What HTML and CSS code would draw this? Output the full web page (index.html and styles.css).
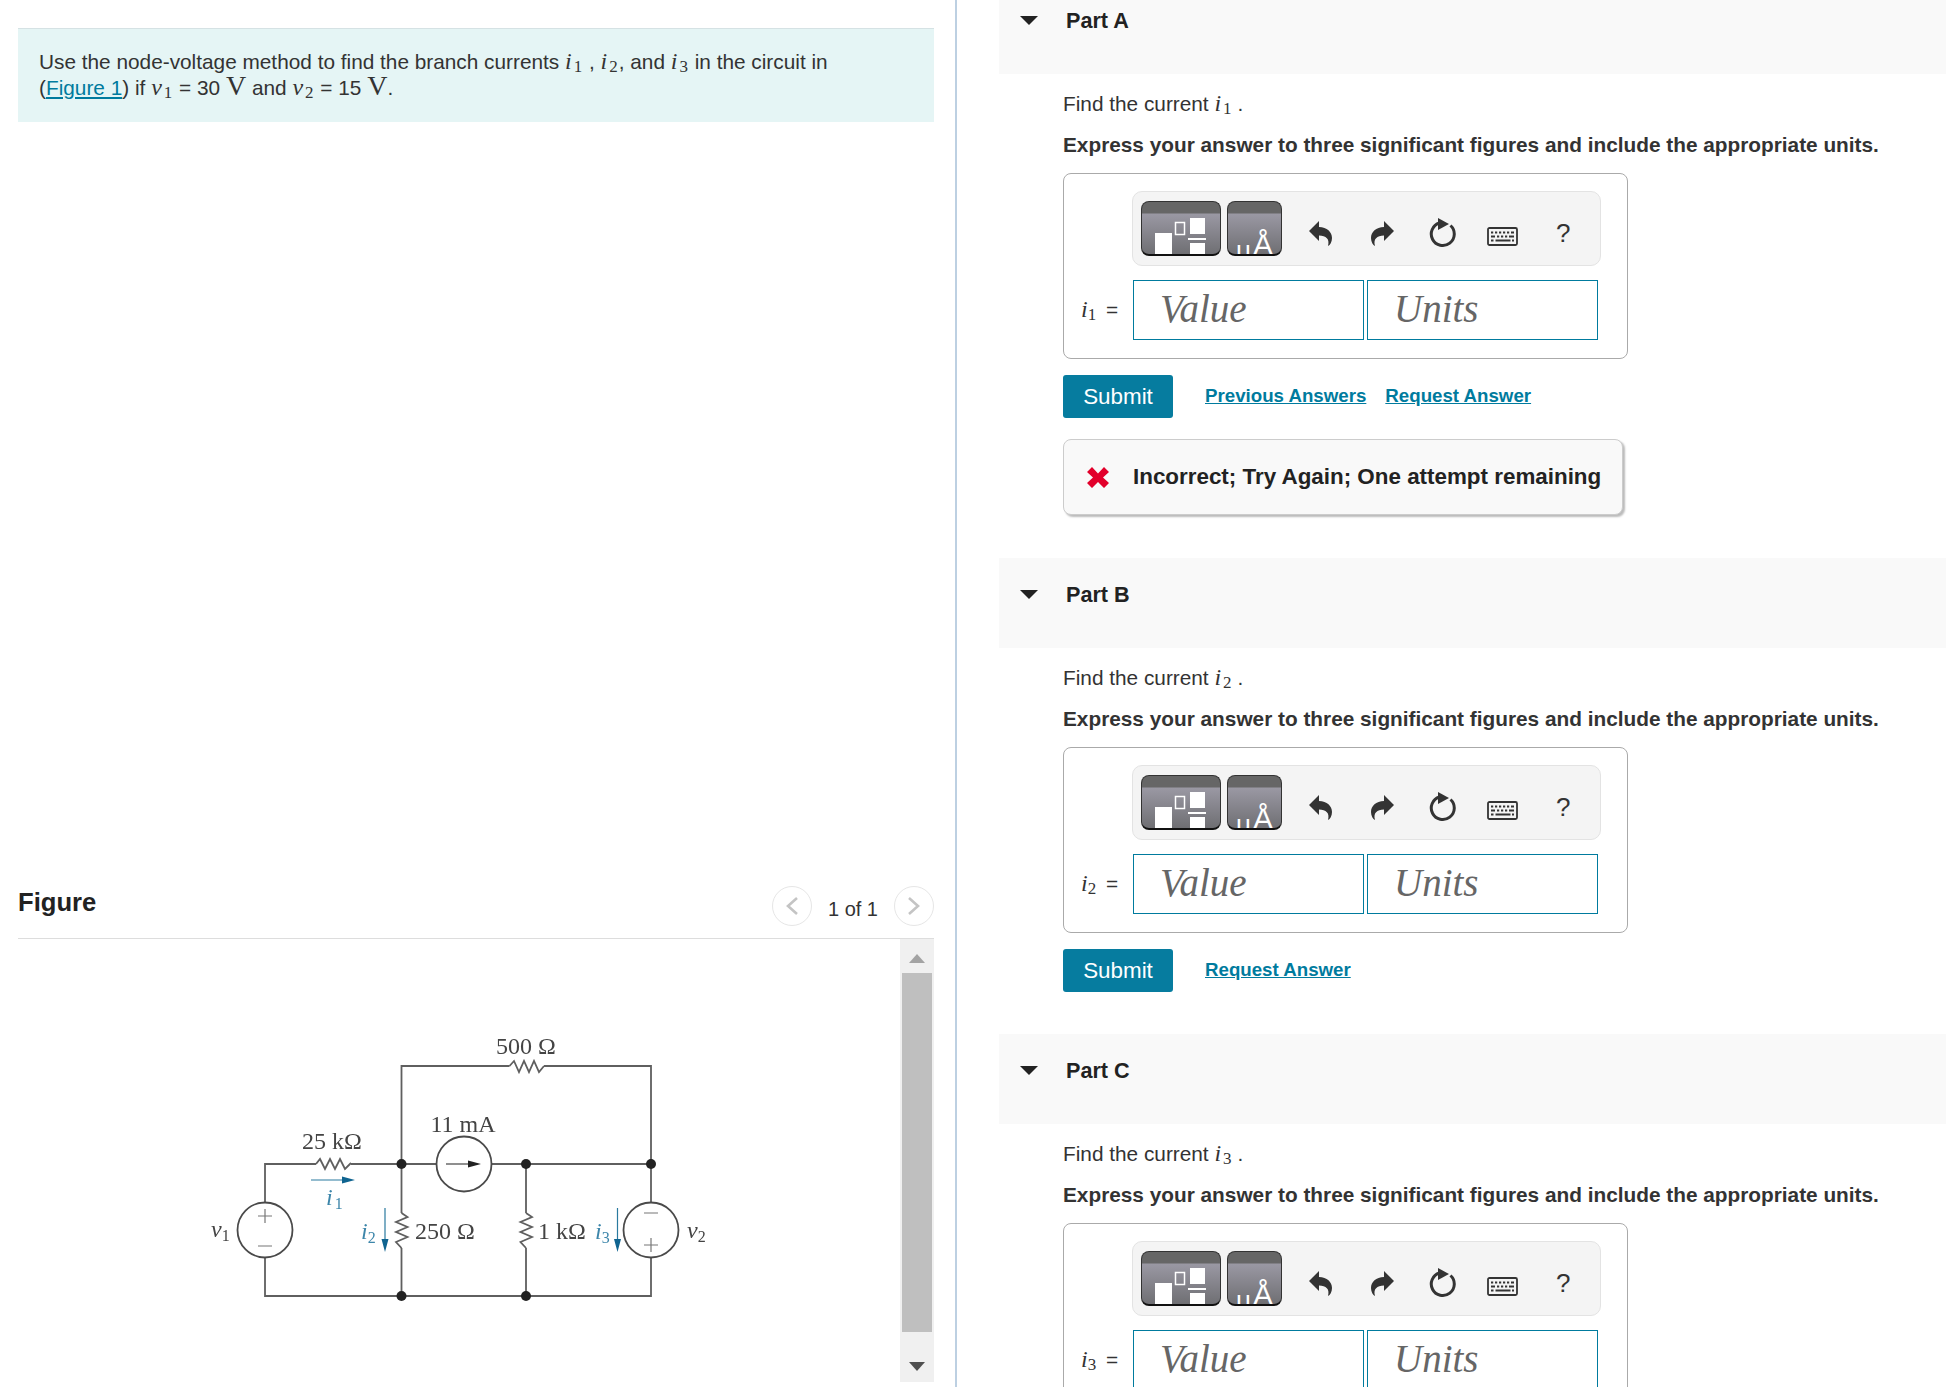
FILE: index.html
```html
<!DOCTYPE html>
<html lang="en">
<head>
<meta charset="utf-8">
<title>Node-voltage method</title>
<link rel="stylesheet" href="styles.css">
</head>
<body>
<svg class="sprite" xmlns="http://www.w3.org/2000/svg">
  <symbol id="i-undo" viewBox="0 0 23 25"><path d="M0 10 L10 0 V6 C18 6 23 11 23 17 C23 21 21 24 19 25 C21 18 17 14.500 10 14.500 V20 Z"/></symbol>
  <symbol id="i-redo" viewBox="0 0 23 25"><path d="M23 10 L13 0 V6 C5 6 0 11 0 17 C0 21 2 24 4 25 C2 18 6 14.500 13 14.500 V20 Z"/></symbol>
  <symbol id="i-reload" viewBox="0 0 28 31"><path d="M10.500 5 A11.500 11.500 0 1 0 21.500 7.500" fill="none" stroke="#333" stroke-width="3"/><path d="M9 0 L20 6 L9 12 Z" fill="#333"/></symbol>
  <symbol id="i-kbd" viewBox="0 0 31 19">
    <rect x="1" y="1" width="29" height="17" rx="1.500" fill="none" stroke="#333" stroke-width="1.800"/>
    <path d="M4 4.500h2.200v2H4zM8 4.500h2.200v2H8zM12 4.500h2.200v2H12zM16 4.500h2.200v2H16zM20 4.500h2.200v2H20zM24 4.500h3v2h-3zM4 8.500h4v2H4zM10 8.500h2.200v2H10zM14 8.500h2.200v2H14zM18 8.500h2.200v2H18zM22 8.500h5v2h-5zM4 12.500h2.500v2H4zM8.500 12.500h15v2h-15zM25 12.500h2v2h-2z" fill="#333"/>
  </symbol>
  <symbol id="i-templates" viewBox="0 0 80 42">
    <rect x="14" y="20" width="17" height="22" fill="#fff"/>
    <rect x="34.500" y="9.500" width="9" height="12" fill="none" stroke="#fff" stroke-width="1.500"/>
    <rect x="49" y="5" width="15" height="16" fill="#fff"/>
    <rect x="47" y="25" width="18" height="2" fill="#fff"/>
    <rect x="49" y="30" width="15" height="12" fill="#fff"/>
  </symbol>
  <symbol id="i-units" viewBox="0 0 55 42">
    <text x="9" y="45.500" class="unit-mu">μ</text>
    <text x="26" y="42" class="unit-a">Å</text>
  </symbol>
</svg>

<main class="page">
  <section class="left">
    <div class="intro">
      <p>Use the node-voltage method to find the branch currents <i class="m">i</i><sub class="ms">1</sub> , <i class="m">i</i><sub class="ms">2</sub>, and <i class="m">i</i><sub class="ms">3</sub> in the circuit in<br>(<a href="#fig">Figure 1</a>) if <i class="m">v</i><sub class="ms">1</sub> = 30 <span class="mv">V</span> and <i class="m">v</i><sub class="ms">2</sub> = 15 <span class="mv">V</span>.</p>
    </div>

    <div class="figure-head" id="fig">
      <h2>Figure</h2>
      <div class="pager">
        <span class="round"><svg width="14" height="20" viewBox="0 0 14 20"><path d="M12 2 L3 10 L12 18" fill="none" stroke="#c4c4c4" stroke-width="2.600"/></svg></span>
        <span class="count">1 of 1</span>
        <span class="round"><svg width="14" height="20" viewBox="0 0 14 20"><path d="M2 2 L11 10 L2 18" fill="none" stroke="#c4c4c4" stroke-width="2.600"/></svg></span>
      </div>
    </div>

    <div class="viewer">
      <div class="canvas">
        <svg class="circuit" width="882" height="443" viewBox="18 938 882 443" xmlns="http://www.w3.org/2000/svg">
          <g fill="none" stroke="#5f5f5f" stroke-width="1.800">
            <path d="M265 1201.500 V1163 H316 M351 1163 H436.500 M491.500 1163 H651 M401.500 1163 V1212 M401.500 1247 V1295 M526 1163 V1212 M526 1247 V1295 M651 1163 V1065 H544 M509.500 1065 H401.500 V1163 M651 1163 V1201.500 M651 1256.500 V1295 H265 V1256.500"/>
            <path d="M316 1163 L320 1158 L325 1168 L330 1158 L335 1168 L340 1158 L345 1168 L351 1162"/>
            <path d="M509.500 1065 L514 1060 L519 1071 L524 1060 L529 1071 L534 1060 L539 1071 L544 1065"/>
            <path d="M401.500 1212 L407.500 1216 L396 1221 L407.500 1226 L396 1231 L407.500 1236 L396 1241 L401.500 1247"/>
            <path d="M526 1212 L532 1216 L520.500 1221 L532 1226 L520.500 1231 L532 1236 L520.500 1241 L526 1247"/>
            <circle cx="265" cy="1229" r="27.500" stroke="#4a4a4a"/>
            <circle cx="651" cy="1229" r="27.500" stroke="#4a4a4a"/>
            <circle cx="464" cy="1163" r="27.500" stroke="#4a4a4a"/>
            <path d="M258 1215 H272 M265 1208 V1222 M258 1245 H272 M644 1212 H658 M644 1244 H658 M651 1237 V1251" stroke="#777" stroke-width="1.200"/>
            <path d="M446 1163 H470" stroke="#444" stroke-width="1.200"/>
            <path d="M311 1179 H345 M385 1207 V1240 M617.500 1207 V1240" stroke="#2a7a9f" stroke-width="1.200"/>
          </g>
          <path d="M468 1159.500 L481 1163 L468 1166.500 Z" fill="#222"/>
          <path d="M342 1175.500 L355 1179 L342 1182.500 Z M381.500 1238 L385 1251 L388.500 1238 Z M614 1238 L617.500 1251 L621 1238 Z" fill="#0f6490"/>
          <g fill="#222">
            <circle cx="401.500" cy="1163" r="5"/>
            <circle cx="526" cy="1163" r="5"/>
            <circle cx="651" cy="1163" r="5"/>
            <circle cx="401.500" cy="1295" r="5"/>
            <circle cx="526" cy="1295" r="5"/>
          </g>
          <g class="clabel">
            <text x="526" y="1053" text-anchor="middle">500 Ω</text>
            <text x="463" y="1131" text-anchor="middle">11 mA</text>
            <text x="332" y="1148" text-anchor="middle">25 kΩ</text>
            <text x="415" y="1238">250 Ω</text>
            <text x="538" y="1238">1 kΩ</text>
            <text x="211" y="1236" class="cmath">v<tspan dy="4" class="csub">1</tspan></text>
            <text x="687" y="1237" class="cmath">v<tspan dy="4" class="csub">2</tspan></text>
          </g>
          <g class="clabel cblue">
            <text x="326" y="1204" class="cmath">i<tspan dy="4" dx="2" class="csub">1</tspan></text>
            <text x="361" y="1238" class="cmath">i<tspan dy="4" class="csub">2</tspan></text>
            <text x="595" y="1238" class="cmath">i<tspan dy="4" class="csub">3</tspan></text>
          </g>
        </svg>
      </div>
      <div class="scrollbar">
        <span class="sb-btn"><i class="tri-up"></i></span>
        <span class="sb-thumb"></span>
        <span class="sb-btn sb-btn-end"><i class="tri-down"></i></span>
      </div>
    </div>
  </section>

  <section class="right">
    <article class="part part-first">
      <header class="part-head"><i class="caret"></i><h3>Part A</h3></header>
      <div class="part-body">
        <p class="q">Find the current <i class="m">i</i><sub class="ms">1</sub> .</p>
        <p class="hint">Express your answer to three significant figures and include the appropriate units.</p>
        <div class="answer">
          <div class="toolbar">
            <span class="tbtn tbtn-wide"><svg width="80" height="42"><use href="#i-templates"/></svg></span>
            <span class="tbtn tbtn-narrow"><svg width="55" height="42"><use href="#i-units"/></svg></span>
            <svg class="ic ic-undo" width="23" height="25"><use href="#i-undo"/></svg>
            <svg class="ic ic-redo" width="23" height="25"><use href="#i-redo"/></svg>
            <svg class="ic ic-reload" width="28" height="31"><use href="#i-reload"/></svg>
            <svg class="ic ic-kbd" width="31" height="19"><use href="#i-kbd"/></svg>
            <span class="help">?</span>
          </div>
          <div class="entry">
            <label class="var"><i class="m">i</i><sub class="ms">1</sub> =</label>
            <span class="field">Value</span>
            <span class="field">Units</span>
          </div>
        </div>
        <div class="actions">
          <button class="submit" type="button">Submit</button>
          <a href="#a">Previous Answers</a>
          <a href="#a">Request Answer</a>
        </div>
        <div class="feedback">
          <svg width="22" height="21" viewBox="0 0 22 21"><path d="M5 0 L11 6.500 L17 0 L22 5 L16 10.500 L22 16 L17 21 L11 15 L5 21 L0 16 L6 10.500 L0 5 Z" fill="#e2002b"/></svg>
          <span>Incorrect; Try Again; One attempt remaining</span>
        </div>
      </div>
    </article>

    <article class="part part-second">
      <header class="part-head"><i class="caret"></i><h3>Part B</h3></header>
      <div class="part-body">
        <p class="q">Find the current <i class="m">i</i><sub class="ms">2</sub> .</p>
        <p class="hint">Express your answer to three significant figures and include the appropriate units.</p>
        <div class="answer">
          <div class="toolbar">
            <span class="tbtn tbtn-wide"><svg width="80" height="42"><use href="#i-templates"/></svg></span>
            <span class="tbtn tbtn-narrow"><svg width="55" height="42"><use href="#i-units"/></svg></span>
            <svg class="ic ic-undo" width="23" height="25"><use href="#i-undo"/></svg>
            <svg class="ic ic-redo" width="23" height="25"><use href="#i-redo"/></svg>
            <svg class="ic ic-reload" width="28" height="31"><use href="#i-reload"/></svg>
            <svg class="ic ic-kbd" width="31" height="19"><use href="#i-kbd"/></svg>
            <span class="help">?</span>
          </div>
          <div class="entry">
            <label class="var"><i class="m">i</i><sub class="ms">2</sub> =</label>
            <span class="field">Value</span>
            <span class="field">Units</span>
          </div>
        </div>
        <div class="actions">
          <button class="submit" type="button">Submit</button>
          <a href="#b">Request Answer</a>
        </div>
      </div>
    </article>

    <article class="part">
      <header class="part-head"><i class="caret"></i><h3>Part C</h3></header>
      <div class="part-body">
        <p class="q">Find the current <i class="m">i</i><sub class="ms">3</sub> .</p>
        <p class="hint">Express your answer to three significant figures and include the appropriate units.</p>
        <div class="answer">
          <div class="toolbar">
            <span class="tbtn tbtn-wide"><svg width="80" height="42"><use href="#i-templates"/></svg></span>
            <span class="tbtn tbtn-narrow"><svg width="55" height="42"><use href="#i-units"/></svg></span>
            <svg class="ic ic-undo" width="23" height="25"><use href="#i-undo"/></svg>
            <svg class="ic ic-redo" width="23" height="25"><use href="#i-redo"/></svg>
            <svg class="ic ic-reload" width="28" height="31"><use href="#i-reload"/></svg>
            <svg class="ic ic-kbd" width="31" height="19"><use href="#i-kbd"/></svg>
            <span class="help">?</span>
          </div>
          <div class="entry">
            <label class="var"><i class="m">i</i><sub class="ms">3</sub> =</label>
            <span class="field">Value</span>
            <span class="field">Units</span>
          </div>
        </div>
      </div>
    </article>
  </section>
</main>
</body>
</html>
```
FILE: styles.css
```css
* { box-sizing: border-box; }
html, body { margin: 0; padding: 0; height: 100%; overflow: hidden; background: #fff; }
body { font-family: "Liberation Sans", Arial, sans-serif; font-size: 20.8px; color: #333; }
p { margin: 0; }
.sprite { display: none; }
.unit-mu { font: 26px "Liberation Sans", sans-serif; fill: #fff; }
.unit-a { font: 30px "Liberation Sans", sans-serif; fill: #fff; }

.page { display: flex; height: 1387px; overflow: hidden; }

/* left column */
.left { width: 955px; flex: none; padding: 28px 21px 0 18px; display: flex; flex-direction: column; }
.intro { height: 94px; background: #e5f5f5; border-top: 1px solid #d5e2e4; padding: 20px 20px 0 21px; line-height: 26px; }
a { color: #007b9e; }
.m { font-family: "Liberation Serif", serif; font-style: italic; font-size: 24px; padding-right: 2px; line-height: 0; }
.ms { font-family: "Liberation Serif", serif; font-size: 17px; vertical-align: -3px; line-height: 0; padding-right: 1px; }
.mv { font-family: "Liberation Serif", serif; font-size: 28px; line-height: 0; }

.figure-head { height: 817px; flex: none; display: flex; align-items: flex-end; justify-content: space-between; border-bottom: 1px solid #ddd; padding-bottom: 12px; }
.figure-head h2 { margin: 0 0 9px; font-size: 25.6px; font-weight: bold; color: #222; line-height: 30px; }
.pager { display: flex; align-items: center; gap: 16px; }
.round { width: 40px; height: 40px; border-radius: 50%; border: 1px solid #e6e6e6; display: flex; align-items: center; justify-content: center; }
.count { font-size: 20px; color: #333; padding-top: 7px; }

.viewer { display: flex; height: 443px; flex: none; }
.canvas { flex: 1; min-width: 0; }
.circuit { display: block; filter: blur(0.35px); }
.clabel text { font-family: "Liberation Serif", serif; font-size: 24px; fill: #444; }
.clabel .cmath { font-style: italic; }
.clabel .csub { font-size: 16px; font-style: normal; }
.cblue text { fill: #3d86aa; }

.scrollbar { width: 34px; flex: none; background: #f0f0f0; display: flex; flex-direction: column; align-items: center; }
.sb-btn { height: 34px; flex: none; display: flex; align-items: center; justify-content: center; width: 100%; padding-top: 4px; }
.sb-btn-end { height: 50px; padding-top: 18px; }
.sb-thumb { width: 30px; flex: 1; background: #bfbfbf; }
.tri-up { border: 8px solid transparent; border-top: 0; border-bottom: 9px solid #a3a3a3; }
.tri-down { border: 8px solid transparent; border-bottom: 0; border-top: 9px solid #505050; }

/* right column */
.right { flex: 1; min-width: 0; border-left: 2px solid #bdd0e2; padding-left: 42px; }
.part-first { margin-top: -16px; }
.part-head { height: 90px; background: #f9f9f9; display: flex; align-items: flex-start; padding: 24px 0 0 21px; }
.part-head h3 { margin: 1px 0 0 28px; font-size: 21.6px; font-weight: bold; line-height: 24px; color: #222; }
.caret { margin-top: 8px; border: 9px solid transparent; border-bottom: 0; border-top: 9px solid #222; }
.part-body { padding: 17px 0 43px 64px; }
.part-second .part-body { padding-bottom: 42px; }
.q { line-height: 26px; }
.q .ms { padding-right: 0; }
.hint { line-height: 26px; margin-top: 15px; font-weight: bold; }

.answer { width: 565px; height: 186px; margin-top: 15px; border: 1px solid #aaa; border-radius: 8px; padding: 17px 0 0 68px; }
.toolbar { width: 469px; height: 75px; background: #f4f4f4; border: 1px solid #e3e3e3; border-radius: 10px; display: flex; align-items: center; padding-left: 8px; }
.tbtn { height: 55px; border-radius: 8px; overflow: hidden; display: block; background: linear-gradient(#666 0 11px, #9a98a3 12px, #6f6f73 100%); border: 1px solid #333; border-bottom: 2px solid #111; flex: none; }
.tbtn svg { display: block; margin: 11px 0 0 -1px; }
.tbtn-wide { width: 80px; }
.tbtn-narrow { width: 55px; margin-left: 6px; }
.ic { flex: none; fill: #333; display: block; margin-top: 9px; }
.ic-undo { margin-left: 27px; }
.ic-redo { margin-left: 39px; }
.ic-reload { margin-left: 35px; }
.ic-kbd { margin-left: 30px; margin-top: 16px; }
.help { margin-left: 38px; font-size: 26px; line-height: 30px; color: #333; margin-top: 9px; }

.entry { display: grid; grid-template-columns: 66px 231px 231px; margin: 14px 0 0 -68px; align-items: center; column-gap: 3px; width: 540px; }
.var { padding-left: 17px; white-space: nowrap; font-size: 20.8px; margin-right: -6px; }
.var .m { font-size: 24px; padding-right: 0; }
.var .ms { font-size: 17px; padding-right: 4px; }
.field { height: 60px; border: 1px solid #007b9e; background: #fff; font-family: "Liberation Serif", serif; font-style: italic; font-size: 39px; line-height: 56px; color: #666; padding-left: 26px; }

.actions { display: flex; align-items: center; margin-top: 16px; height: 43px; font-size: 18.7px; font-weight: bold; }
.submit { width: 110px; height: 43px; background: #067c9f; color: #fff; border: 0; border-radius: 3px; font: 22.4px "Liberation Sans", sans-serif; padding: 0; margin-right: 32px; }
.actions a { margin-right: 19px; margin-top: -1px; }

.feedback { width: 560px; height: 76px; margin-top: 21px; background: #f9f9f9; border: 1px solid #ccc; border-radius: 8px; box-shadow: 2px 2px 2px #bbb; display: flex; align-items: center; padding-left: 23px; gap: 24px; font-weight: bold; color: #222; font-size: 22.4px; }
.feedback svg { flex: none; }
```
